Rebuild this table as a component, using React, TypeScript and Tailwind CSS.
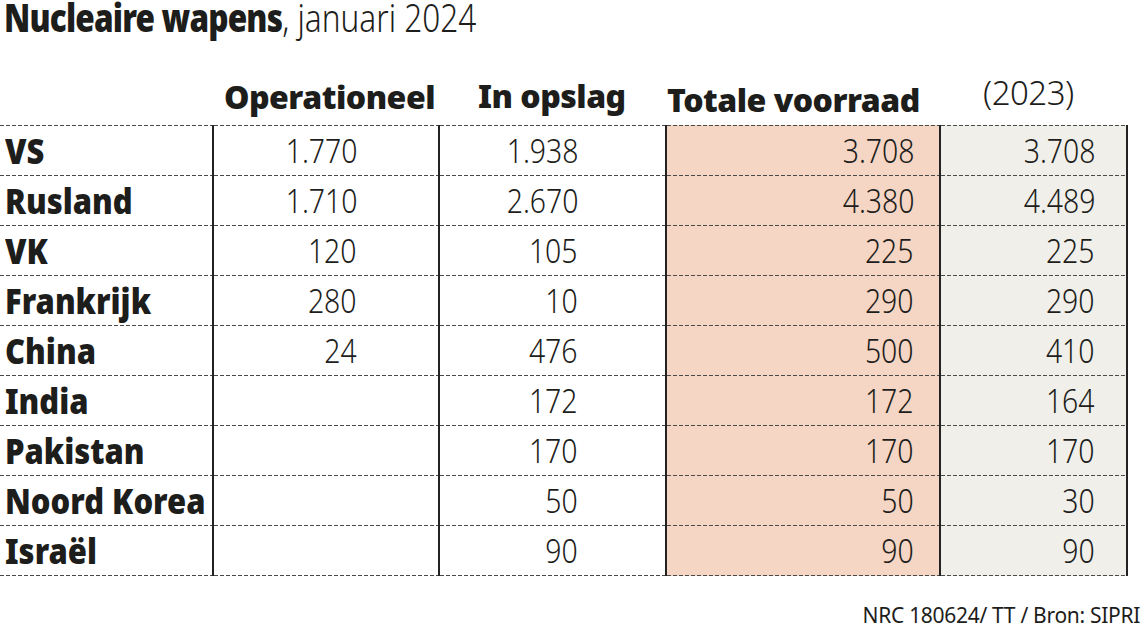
import React from "react"

type Row = {
  land: string
  operationeel: string
  opslag: string
  totaal: string
  vorig: string
}

const rows: Row[] = [
  { land: "VS", operationeel: "1.770", opslag: "1.938", totaal: "3.708", vorig: "3.708" },
  { land: "Rusland", operationeel: "1.710", opslag: "2.670", totaal: "4.380", vorig: "4.489" },
  { land: "VK", operationeel: "120", opslag: "105", totaal: "225", vorig: "225" },
  { land: "Frankrijk", operationeel: "280", opslag: "10", totaal: "290", vorig: "290" },
  { land: "China", operationeel: "24", opslag: "476", totaal: "500", vorig: "410" },
  { land: "India", operationeel: "", opslag: "172", totaal: "172", vorig: "164" },
  { land: "Pakistan", operationeel: "", opslag: "170", totaal: "170", vorig: "170" },
  { land: "Noord Korea", operationeel: "", opslag: "50", totaal: "50", vorig: "30" },
  { land: "Israël", operationeel: "", opslag: "90", totaal: "90", vorig: "90" },
]

const cols = "grid grid-cols-[212px_226px_227px_274px_189px]"
const dash =
  "bg-[image:repeating-linear-gradient(90deg,#4a4a4a_0_4px,transparent_4px_6px)] bg-[length:100%_1px] bg-no-repeat bg-top"

function DashLine() {
  return (
    <div className={`${cols} h-px`}>
      <div className={dash} />
      <div className={`${dash} border-l-2 border-[#222]`} />
      <div className={`${dash} border-l-2 border-[#222]`} />
      <div className={`bg-[#f5d5c3] ${dash} border-l-2 border-[#222]`} />
      <div className={`bg-[#f0efea] ${dash} border-x-2 border-[#222]`} />
    </div>
  )
}

// smalle cijfers, zoals in de krant
function Num({ value }: { value: string }) {
  return <span className="inline-block origin-right scale-x-[0.86] font-light">{value}</span>
}

export default function App() {
  return (
    <div className="w-[1144px] h-[631px] bg-white text-[#1d1d1b] font-['Noto_Sans','Liberation_Sans',sans-serif] overflow-hidden">
      <h1 className="-mt-[9px] pl-[4px] h-[52px] text-[38px] leading-[52px] whitespace-nowrap">
        <span className="inline-block origin-left scale-x-[0.83]">
          <span className="font-black tracking-[-1px]">Nucleaire wapens</span>
          <span className="font-light">, januari 2024</span>
        </span>
      </h1>

      <div className={`${cols} h-[82px] items-end text-[32px] leading-[32px] font-black tracking-[-0.5px] whitespace-nowrap`}>
        <div />
        <div className="pl-[12px] pb-[12px]">Operationeel</div>
        <div className="pl-[40px] pb-[13px]">In opslag</div>
        <div className="pl-[2px] pb-[9px]">Totale voorraad</div>
        <div className="pl-[44px] pb-[16px] text-[33px] font-light">(2023)</div>
      </div>

      {rows.map((r) => (
        <div key={r.land}>
          <DashLine />
          <div className={`${cols} h-[49px] items-stretch text-[33px] leading-[49px]`}>
            <div className="pl-[5px] text-[36px] font-black whitespace-nowrap">
              <span className="inline-block origin-left scale-x-[0.86]">{r.land}</span>
            </div>
            <div className="border-l-2 border-[#222] pr-[81px] text-right">
              <Num value={r.operationeel} />
            </div>
            <div className="border-l-2 border-[#222] pr-[87px] text-right">
              <Num value={r.opslag} />
            </div>
            <div className="border-l-2 border-[#222] bg-[#f5d5c3] pr-[25px] text-right">
              <Num value={r.totaal} />
            </div>
            <div className="border-x-2 border-[#222] bg-[#f0efea] pr-[31px] text-right">
              <Num value={r.vorig} />
            </div>
          </div>
        </div>
      ))}
      <DashLine />

      <div className="mt-[26px] pr-[4px] text-right text-[21px] leading-[26px] tracking-[-0.3px]">
        NRC 180624/ TT / Bron: SIPRI
      </div>
    </div>
  )
}
